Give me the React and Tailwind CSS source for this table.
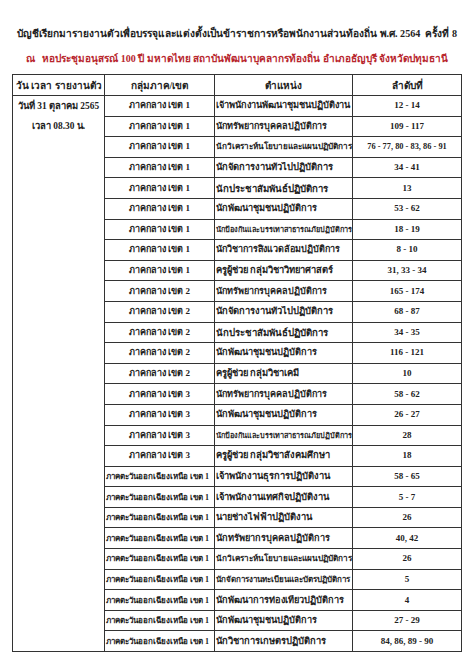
import React, { useLayoutEffect, useRef } from "react";

// [group, position, order, position text size]
const rows = [
  ["ภาคกลาง เขต 1", "เจ้าพนักงานพัฒนาชุมชนปฏิบัติงาน", "12 - 14", "text-[9.2px]"],
  ["ภาคกลาง เขต 1", "นักทรัพยากรบุคคลปฏิบัติการ", "109 - 117", "text-[9px]"],
  ["ภาคกลาง เขต 1", "นักวิเคราะห์นโยบายและแผนปฏิบัติการ", "76 - 77, 80 - 83, 86 - 91", "text-[9px]"],
  ["ภาคกลาง เขต 1", "นักจัดการงานทั่วไปปฏิบัติการ", "34 - 41", "text-[9.4px]"],
  ["ภาคกลาง เขต 1", "นักประชาสัมพันธ์ปฏิบัติการ", "13", "text-[9.6px]"],
  ["ภาคกลาง เขต 1", "นักพัฒนาชุมชนปฏิบัติการ", "53 - 62", "text-[9.2px]"],
  ["ภาคกลาง เขต 1", "นักป้องกันและบรรเทาสาธารณภัยปฏิบัติการ", "18 - 19", "text-[8.4px]"],
  ["ภาคกลาง เขต 1", "นักวิชาการสิ่งแวดล้อมปฏิบัติการ", "8 - 10", "text-[9px]"],
  ["ภาคกลาง เขต 1", "ครูผู้ช่วย กลุ่มวิชาวิทยาศาสตร์", "31, 33 - 34", "text-[9.4px]"],
  ["ภาคกลาง เขต 2", "นักทรัพยากรบุคคลปฏิบัติการ", "165 - 174", "text-[9px]"],
  ["ภาคกลาง เขต 2", "นักจัดการงานทั่วไปปฏิบัติการ", "68 - 87", "text-[9.4px]"],
  ["ภาคกลาง เขต 2", "นักประชาสัมพันธ์ปฏิบัติการ", "34 - 35", "text-[9.6px]"],
  ["ภาคกลาง เขต 2", "นักพัฒนาชุมชนปฏิบัติการ", "116 - 121", "text-[9.2px]"],
  ["ภาคกลาง เขต 2", "ครูผู้ช่วย กลุ่มวิชาเคมี", "10", "text-[9.4px]"],
  ["ภาคกลาง เขต 3", "นักทรัพยากรบุคคลปฏิบัติการ", "58 - 62", "text-[9px]"],
  ["ภาคกลาง เขต 3", "นักพัฒนาชุมชนปฏิบัติการ", "26 - 27", "text-[9.2px]"],
  ["ภาคกลาง เขต 3", "นักป้องกันและบรรเทาสาธารณภัยปฏิบัติการ", "28", "text-[8.4px]"],
  ["ภาคกลาง เขต 3", "ครูผู้ช่วย กลุ่มวิชาสังคมศึกษา", "18", "text-[9.4px]"],
  ["ภาคตะวันออกเฉียงเหนือ เขต 1", "เจ้าพนักงานธุรการปฏิบัติงาน", "58 - 65", "text-[9.4px]"],
  ["ภาคตะวันออกเฉียงเหนือ เขต 1", "เจ้าพนักงานเทศกิจปฏิบัติงาน", "5 - 7", "text-[9.4px]"],
  ["ภาคตะวันออกเฉียงเหนือ เขต 1", "นายช่างไฟฟ้าปฏิบัติงาน", "26", "text-[9.4px]"],
  ["ภาคตะวันออกเฉียงเหนือ เขต 1", "นักทรัพยากรบุคคลปฏิบัติการ", "40, 42", "text-[9.2px]"],
  ["ภาคตะวันออกเฉียงเหนือ เขต 1", "นักวิเคราะห์นโยบายและแผนปฏิบัติการ", "26", "text-[9px]"],
  ["ภาคตะวันออกเฉียงเหนือ เขต 1", "นักจัดการงานทะเบียนและบัตรปฏิบัติการ", "5", "text-[8.8px]"],
  ["ภาคตะวันออกเฉียงเหนือ เขต 1", "นักพัฒนาการท่องเที่ยวปฏิบัติการ", "4", "text-[9.2px]"],
  ["ภาคตะวันออกเฉียงเหนือ เขต 1", "นักพัฒนาชุมชนปฏิบัติการ", "27 - 29", "text-[9.2px]"],
  ["ภาคตะวันออกเฉียงเหนือ เขต 1", "นักวิชาการเกษตรปฏิบัติการ", "84, 86, 89 - 90", "text-[9.4px]"],
];

const App = () => {
  const tableRef = useRef(null);

  // shrink any cell text until it fits inside its cell
  useLayoutEffect(() => {
    const cells = tableRef.current.querySelectorAll("[data-fit]");
    cells.forEach((el) => {
      let size = parseFloat(getComputedStyle(el).fontSize);
      let guard = 0;
      while (el.scrollWidth > el.clientWidth && guard < 60) {
        size -= 0.1;
        el.style.fontSize = size + "px";
        guard++;
      }
    });
  }, []);

  return (
    <div className="w-[474px] h-[667px] bg-white text-[#222] font-['Liberation_Serif',serif] font-bold overflow-hidden">
      <div className="pt-[27px] text-center text-[10.15px] leading-[14px] whitespace-nowrap">
        บัญชีเรียกมารายงานตัวเพื่อบรรจุและแต่งตั้งเป็นข้าราชการหรือพนักงานส่วนท้องถิ่น พ.ศ. 2564&nbsp; ครั้งที่ 8
      </div>
      <div className="mt-[11px] text-center text-[10px] leading-[14px] text-[#b8262d] whitespace-nowrap">
        ณ&nbsp;&nbsp; หอประชุมอนุสรณ์ 100 ปี มหาดไทย สถาบันพัฒนาบุคลากรท้องถิ่น อำเภอธัญบุรี จังหวัดปทุมธานี
      </div>
      <table ref={tableRef} className="mt-[8px] ml-[12px] w-[449px] table-fixed border-collapse border-[1.5px] border-[#333] text-[9px] leading-[11px]">
        <colgroup>
          <col className="w-[92px]" />
          <col className="w-[110px]" />
          <col className="w-[138px]" />
          <col className="w-[109px]" />
        </colgroup>
        <thead>
          <tr className="h-[21px] text-[10px]">
            <th className="border border-[#333] font-bold">วัน เวลา รายงานตัว</th>
            <th className="border border-[#333] font-bold">กลุ่มภาค/เขต</th>
            <th className="border border-[#333] font-bold">ตำแหน่ง</th>
            <th className="border border-[#333] font-bold">ลำดับที่</th>
          </tr>
        </thead>
        <tbody>
          {rows.map((r, i) => (
            <tr key={i} className="h-[20.6px]">
              {i === 0 && (
                <td rowSpan={rows.length} className="border border-[#333] align-top text-center pt-[5px] text-[9.4px]">
                  <div>วันที่ 31 ตุลาคม 2565</div>
                  <div className="mt-[9px]">เวลา 08.30 น.</div>
                </td>
              )}
              <td className="border border-[#333] p-0">
                <div data-fit className={"whitespace-nowrap overflow-hidden " + (r[0].length > 15 ? "text-left pl-[1px] text-[9.6px]" : "text-center")}>
                  {r[0]}
                </div>
              </td>
              <td className="border border-[#333] p-0">
                <div data-fit className={"text-left pl-[1px] whitespace-nowrap overflow-hidden " + r[3]}>
                  {r[1]}
                </div>
              </td>
              <td className={"border border-[#333] text-center whitespace-nowrap " + (r[2].length > 20 ? "text-[8.4px]" : "")}>{r[2]}</td>
            </tr>
          ))}
        </tbody>
      </table>
    </div>
  );
};

export default App;
